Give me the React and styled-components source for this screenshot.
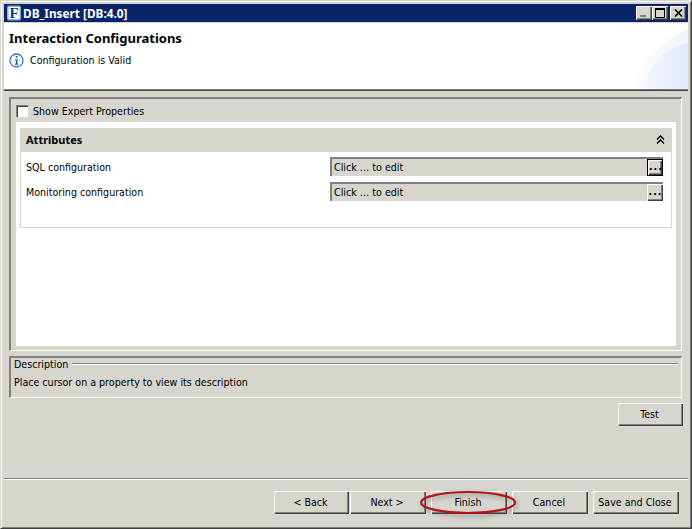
import React from 'react'
import styled, { createGlobalStyle } from 'styled-components'

const Global = createGlobalStyle`
  html, body { margin: 0; padding: 0; background: #d6d5ce; }
  * { box-sizing: border-box; }
  body { font-family: "DejaVu Sans", "Liberation Sans", sans-serif; font-stretch: condensed; font-size: 10.6px; color: #000; }
`

const Frame = styled.div`
  width: 692px;
  height: 529px;
  background: #d6d5ce;
  border-top: 1px solid #d6d5ce;
  border-left: 1px solid #d6d5ce;
  border-right: 1px solid #404040;
  border-bottom: 1px solid #404040;
  box-shadow: inset 1px 1px 0 #fff, inset -1px -1px 0 #808080;
  padding: 3px;
  display: flex;
  flex-direction: column;
  position: relative;
`

const TitleBar = styled.div`
  height: 18px;
  flex: none;
  background: #0a246a;
  display: flex;
  align-items: center;
  padding: 0 2px 0 2px;
`
const TitleText = styled.span`
  color: #fff;
  font-family: "Noto Sans", sans-serif;
  font-weight: 700;
  font-size: 11.8px;
  margin-left: 1px;
  flex: 1;
`
const WinButton = styled.button`
  width: 16px;
  height: 14px;
  margin-left: ${p => p.$gap || 0}px;
  padding: 0;
  background: #d6d5ce;
  border: none;
  box-shadow: inset 1px 1px 0 #fff, inset -1px -1px 0 #404040, inset -2px -2px 0 #808080;
  display: flex;
  align-items: center;
  justify-content: center;
`

const Header = styled.div`
  height: 67px;
  flex: none;
  margin-top: 1px;
  background: #fff;
  border-bottom: 1px solid #808080;
  padding: 7px 5px 0;
  position: relative;
  overflow: hidden;
`
const HeaderArt = styled.svg`
  position: absolute;
  right: 0;
  top: 0;
`
const HeaderTitle = styled.div`
  font-family: "Noto Sans", sans-serif;
  font-size: 13px;
  font-weight: 700;
  line-height: 16px;
`
const Status = styled.div`
  display: flex;
  align-items: center;
  margin-top: 6px;
  height: 16px;
  gap: 6px;
`

const Body = styled.div`
  flex: 1;
  display: flex;
  flex-direction: column;
  border-top: 1px solid #404040;
  padding: 6px 6px 0 5px;
`

const Panel = styled.div`
  height: 254px;
  flex: none;
  border-top: 2px solid #808080;
  border-left: 2px solid #808080;
  border-right: 1px solid #fff;
  border-bottom: 1px solid #fff;
  display: flex;
  flex-direction: column;
  padding: 0 5px 4px 5px;
`
const CheckRow = styled.label`
  height: 23px;
  flex: none;
  display: flex;
  align-items: center;
  gap: 5px;
`
const CheckBox = styled.span`
  width: 12px;
  height: 12px;
  background: #fff;
  border-top: 1px solid #808080;
  border-left: 1px solid #808080;
  box-shadow: inset 1px 1px 0 #404040;
`
const Sheet = styled.div`
  flex: 1;
  background: #fff;
  padding: 6px 4px;
`
const Section = styled.div`
  height: 100px;
  border: 1px solid #d6d5ce;
`
const SectionHead = styled.div`
  height: 23px;
  background: #d6d5ce;
  display: flex;
  align-items: center;
  justify-content: space-between;
  padding: 0 6px 2px 5px;
  font-family: "Noto Sans", sans-serif;
  font-size: 11px;
  font-weight: 700;
`
const Rows = styled.div`
  padding: 5px 8px 0 5px;
  display: flex;
  flex-direction: column;
  gap: 6px;
`
const Row = styled.div`
  display: flex;
  align-items: center;
  height: 19px;
`
const RowLabel = styled.span`
  width: 304px;
  flex: none;
  padding-top: 1px;
`
const Field = styled.div`
  flex: 1;
  height: 19px;
  background: #d6d5ce;
  border-top: 2px solid #808080;
  border-left: 2px solid #808080;
  display: flex;
  align-items: center;
  justify-content: space-between;
  padding-left: 2px;
`
const FieldText = styled.span`
  margin-bottom: 2px;
`
const DotsButton = styled.button`
  width: 16px;
  height: 17px;
  padding: 0 0 2px 1px;
  font: inherit;
  font-weight: 700;
  letter-spacing: 1px;
  line-height: 1;
  background: #d6d5ce;
  border: ${p => (p.$focus ? '1px solid #000' : 'none')};
  box-shadow: inset 1px 1px 0 #fff, inset -1px -1px 0 #404040, inset -2px -2px 0 #808080;
`

const Description = styled.div`
  height: 42px;
  flex: none;
  margin-top: 5px;
  border-top: 2px solid #808080;
  border-left: 2px solid #808080;
  border-right: 1px solid #fff;
  border-bottom: 1px solid #fff;
  padding: 0 3px;
`
const LegendRow = styled.div`
  display: flex;
  align-items: center;
  height: 12px;
  gap: 4px;
`
const LegendLine = styled.span`
  flex: 1;
  height: 2px;
  background: #808080;
  border-bottom: 1px solid #fff;
`
const DescText = styled.div`
  margin-top: 5px;
  line-height: 15px;
`

const TestRow = styled.div`
  display: flex;
  justify-content: flex-end;
  margin: 5px -1px 0 0;
`
const Button = styled.button`
  width: ${p => p.$w}px;
  height: 23px;
  flex: none;
  margin-left: ${p => p.$gap || 0}px;
  padding: 0 2px 2px 0;
  font: inherit;
  color: #000;
  background: #d6d5ce;
  border: none;
  box-shadow: inset 1px 1px 0 #fff, inset -1px -1px 0 #404040, inset -2px -2px 0 #808080;
`

const Spacer = styled.div`
  flex: 1;
`
const Divider = styled.div`
  height: 2px;
  flex: none;
  margin: 0 -6px 0 -5px;
  border-top: 1px solid #808080;
  border-bottom: 1px solid #fff;
`
const Footer = styled.div`
  display: flex;
  justify-content: flex-end;
  padding: 11px 3px 11px 0;
  position: relative;
`
const Callout = styled.svg`
  position: absolute;
  left: 407px;
  top: 5px;
  pointer-events: none;
`

const FLogo = () => (
  <svg width="16" height="16" viewBox="0 0 16 16">
    <rect x="1" y="0.5" width="14" height="15" rx="2" fill="#7fb2e0" />
    <rect x="2.5" y="2" width="11" height="12" fill="#fff" />
    <text x="8" y="13" textAnchor="middle" fontFamily="Liberation Serif, serif" fontWeight="700" fontSize="15" fill="#0f3a78">F</text>
  </svg>
)

const InfoIcon = () => (
  <svg width="15" height="15" viewBox="0 0 15 15">
    <circle cx="7.5" cy="7.5" r="6.5" fill="#fff" stroke="#2f79b8" strokeWidth="1.3" />
    <rect x="6.7" y="3" width="1.8" height="1.8" fill="#1b5f9e" />
    <path d="M6 6.3h2.5v4.4h1v1H5.8v-1h1V7.3H6z" fill="#1b5f9e" />
  </svg>
)

const Collapse = () => (
  <svg width="9" height="9" viewBox="0 0 9 9">
    <path d="M1 4.5 L4.5 1 L8 4.5 M1 8.5 L4.5 5 L8 8.5" fill="none" stroke="#000" strokeWidth="1.3" />
  </svg>
)

const App = () => (
  <>
    <Global />
    <Frame>
      <TitleBar>
        <FLogo />
        <TitleText>DB_Insert [DB:4.0]</TitleText>
        <WinButton aria-label="minimize">
          <svg width="8" height="8"><rect x="0" y="6" width="6" height="2" fill="#808080" /></svg>
        </WinButton>
        <WinButton aria-label="maximize">
          <svg width="10" height="10"><path d="M0.5 1.5h9v8h-9z" fill="none" stroke="#000" /><rect width="10" height="2" fill="#000" /></svg>
        </WinButton>
        <WinButton aria-label="close" $gap={2}>
          <svg width="9" height="8"><path d="M1 0.5 L8 7.5 M8 0.5 L1 7.5" stroke="#000" strokeWidth="1.6" /></svg>
        </WinButton>
      </TitleBar>
      <Header>
        <HeaderArt width="56" height="66" viewBox="0 0 56 66">
          <defs>
            <linearGradient id="fade" x1="0" x2="1" y1="0" y2="0">
              <stop offset="0" stopColor="#fbfcff" />
              <stop offset="1" stopColor="#f0f2fe" />
            </linearGradient>
            <linearGradient id="fade2" x1="0" x2="1" y1="0" y2="0">
              <stop offset="0" stopColor="#f4f7ff" />
              <stop offset="1" stopColor="#e2e8fc" />
            </linearGradient>
          </defs>
          <path d="M2 66 C8 42 24 22 56 6 V66 Z" fill="url(#fade)" />
          <path d="M12 66 C16 48 26 26 56 20 V66 Z" fill="url(#fade2)" />
        </HeaderArt>
        <HeaderTitle>Interaction Configurations</HeaderTitle>
        <Status>
          <InfoIcon />
          <span>Configuration is Valid</span>
        </Status>
      </Header>
      <Body>
        <Panel>
          <CheckRow>
            <CheckBox />
            Show Expert Properties
          </CheckRow>
          <Sheet>
            <Section>
              <SectionHead>
                Attributes
                <Collapse />
              </SectionHead>
              <Rows>
                <Row>
                  <RowLabel>SQL configuration</RowLabel>
                  <Field>
                    <FieldText>Click … to edit</FieldText>
                    <DotsButton $focus>...</DotsButton>
                  </Field>
                </Row>
                <Row>
                  <RowLabel>Monitoring configuration</RowLabel>
                  <Field>
                    <FieldText>Click … to edit</FieldText>
                    <DotsButton>...</DotsButton>
                  </Field>
                </Row>
              </Rows>
            </Section>
          </Sheet>
        </Panel>
        <Description>
          <LegendRow>
            Description
            <LegendLine />
          </LegendRow>
          <DescText>Place cursor on a property to view its description</DescText>
        </Description>
        <TestRow>
          <Button $w={65}>Test</Button>
        </TestRow>
        <Spacer />
        <Divider />
        <Footer>
          <Button $w={75}>&lt; Back</Button>
          <Button $w={76} $gap={1}>Next &gt;</Button>
          <Button $w={76} $gap={5}>Finish</Button>
          <Button $w={76} $gap={5}>Cancel</Button>
          <Button $w={86} $gap={5}>Save and Close</Button>
          <Callout width="106" height="36" viewBox="0 0 106 36">
            <defs>
              <filter id="sh" x="-20%" y="-40%" width="140%" height="180%">
                <feGaussianBlur stdDeviation="2" />
              </filter>
            </defs>
            <ellipse cx="54" cy="20" rx="47" ry="10.5" fill="none" stroke="#555" strokeOpacity="0.55" strokeWidth="2" filter="url(#sh)" />
            <ellipse cx="52" cy="17.5" rx="47" ry="10.5" fill="none" stroke="#b5121b" strokeWidth="2.2" />
          </Callout>
        </Footer>
      </Body>
    </Frame>
  </>
)

export default App
